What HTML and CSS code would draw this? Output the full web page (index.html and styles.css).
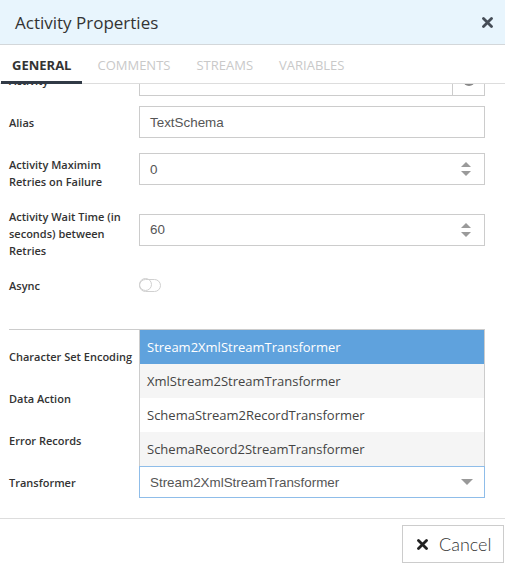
FILE: index.html
```html
<html lang="en">
<head>
    <meta charset="UTF-8">
    <meta name="viewport" content="width=device-width, initial-scale=1.0">
    <title>Activity Properties</title>
    <link rel="stylesheet" href="styles.css">
</head>
<body>
    <div class="modal">
        <div class="modal_header">
            <span class="title">Activity Properties</span>
            <span class="close">
                <svg width="11" height="11" viewBox="0 0 11 11"><path d="M1.5 1.5 L9.5 9.5 M9.5 1.5 L1.5 9.5" stroke="#454d57" stroke-width="2.8" stroke-linecap="round"/></svg>
            </span>
        </div>
        <div class="tabs">
            <span class="tab active">General</span>
            <span class="tab">Comments</span>
            <span class="tab">Streams</span>
            <span class="tab">Variables</span>
        </div>
        <div class="modal_body">
            <div class="body_inner">
                <div class="row">
                    <label>Activity</label>
                    <div class="control">
                        <div class="input with_addon">
                            <span class="field"></span>
                            <span class="addon"><span class="dot"></span></span>
                        </div>
                    </div>
                </div>
                <div class="row">
                    <label>Alias</label>
                    <div class="control">
                        <div class="input"><span class="field">TextSchema</span></div>
                    </div>
                </div>
                <div class="row">
                    <label class="multi">Activity Maximim Retries on Failure</label>
                    <div class="control">
                        <div class="input">
                            <span class="field">0</span>
                            <span class="spinner"><i class="up"></i><i class="down"></i></span>
                        </div>
                    </div>
                </div>
                <div class="row">
                    <label class="multi">Activity Wait Time (in seconds) between Retries</label>
                    <div class="control">
                        <div class="input">
                            <span class="field">60</span>
                            <span class="spinner"><i class="up"></i><i class="down"></i></span>
                        </div>
                    </div>
                </div>
                <div class="row">
                    <label>Async</label>
                    <div class="control">
                        <span class="toggle"></span>
                    </div>
                </div>

                <div class="separator"></div>

                <div class="row">
                    <label>Character Set Encoding</label>
                    <div class="control"><div class="input"></div></div>
                </div>
                <div class="row">
                    <label>Data Action</label>
                    <div class="control"><div class="input"></div></div>
                </div>
                <div class="row">
                    <label>Error Records</label>
                    <div class="control"><div class="input"></div></div>
                </div>
                <div class="row">
                    <label>Transformer</label>
                    <div class="control">
                        <ul class="dropdown">
                            <li class="selected">Stream2XmlStreamTransformer</li>
                            <li class="odd">XmlStream2StreamTransformer</li>
                            <li>SchemaStream2RecordTransformer</li>
                            <li class="odd">SchemaRecord2StreamTransformer</li>
                        </ul>
                        <div class="input select focused">
                            <span class="field">Stream2XmlStreamTransformer</span>
                            <span class="caret"></span>
                        </div>
                    </div>
                </div>
            </div>
        </div>
        <div class="modal_footer">
            <button class="cancel">
                <svg width="11" height="11" viewBox="0 0 11 11"><path d="M1.5 1.5 L9.5 9.5 M9.5 1.5 L1.5 9.5" stroke="#222" stroke-width="2.8" stroke-linecap="round"/></svg>
                Cancel
            </button>
        </div>
    </div>
</body>
</html>
```

FILE: styles.css
```css
body {
    margin: 0;
    background-color: #fff;
    font-family: "Open Sans", "Liberation Sans", sans-serif;
    color: #333;
}
.modal {
    width: 505px;
    height: 566px;
    overflow: hidden;
}
.modal_header {
    height: 44px;
    background-color: #e8f5fd;
    border-bottom: 1px solid #d3d7da;
    display: flex;
    align-items: center;
    justify-content: space-between;
    padding: 0 12px 0 15px;
}
.modal_header .title {
    font-size: 17px;
    color: #333;
}
.modal_header .close {
    display: flex;
    margin-top: 1px;
}
.tabs {
    display: flex;
    height: 38px;
    border-bottom: 1px solid #ddd;
    padding-left: 1px;
}
.tabs .tab {
    text-transform: uppercase;
    font-size: 13px;
    color: #c9c9c9;
    padding: 3px 11px 0;
    margin-right: 4px;
    display: flex;
    align-items: center;
    border-bottom: 3px solid transparent;
    margin-bottom: -1px;
}
.tabs .tab.active {
    color: #333;
    font-weight: 700;
    border-bottom-color: #313a46;
}
.modal_body {
    height: 434px;
    overflow: hidden;
    border-bottom: 1px solid #ddd;
}
.body_inner {
    margin-top: -20px;
    padding: 0 20px 0 9px;
}
.row {
    display: flex;
    align-items: center;
    margin-bottom: 10px;
}
.row label {
    width: 130px;
    box-sizing: border-box;
    flex-shrink: 0;
    font-size: 11px;
    font-weight: 600;
    line-height: 17px;
    color: #333;
}
.row label.multi {
    padding-top: 8px;
    padding-right: 4px;
}
.control {
    flex: 1;
    position: relative;
    min-height: 32px;
    display: flex;
    align-items: center;
}
.input {
    width: 100%;
    height: 32px;
    box-sizing: border-box;
    border: 1px solid #ccc;
    display: flex;
    align-items: center;
    font-family: "Liberation Sans", Arial, sans-serif;
    font-size: 13.4px;
    color: #555;
    background-color: #fff;
}
.input .field {
    flex: 1;
    padding-left: 10px;
}
.input .addon {
    width: 31px;
    height: 100%;
    border-left: 1px solid #ccc;
    display: flex;
    align-items: center;
    justify-content: center;
}
.input .addon .dot {
    width: 12px;
    height: 12px;
    border-radius: 50%;
    background-color: #888;
}
.spinner {
    display: flex;
    flex-direction: column;
    gap: 4px;
    margin-right: 13px;
}
.spinner i {
    width: 0;
    height: 0;
    border-left: 5px solid transparent;
    border-right: 5px solid transparent;
}
.spinner .up {
    border-bottom: 5px solid #9a9a9a;
}
.spinner .down {
    border-top: 5px solid #9a9a9a;
}
.toggle {
    width: 20px;
    height: 11px;
    border: 1.5px solid #d0d0d0;
    border-radius: 8px;
    position: relative;
}
.toggle::before {
    content: "";
    position: absolute;
    left: -1.5px;
    top: -1.5px;
    width: 11px;
    height: 11px;
    border: 1.5px solid #d0d0d0;
    border-radius: 50%;
}
.separator {
    border-top: 1px solid #ccc;
    margin: 28px 0 10px 0;
}
.select.focused {
    border-color: #8fbde9;
}
.select .caret {
    width: 0;
    height: 0;
    border-left: 6px solid transparent;
    border-right: 6px solid transparent;
    border-top: 6px solid #999;
    margin-right: 11px;
}
.dropdown {
    position: absolute;
    left: 0;
    right: 0;
    bottom: 100%;
    margin: 0;
    padding: 0;
    list-style: none;
    border: 1px solid #ccc;
    border-bottom: none;
    background-color: #fff;
    font-size: 13px;
    color: #444;
}
.dropdown li {
    height: 34px;
    line-height: 34px;
    padding-left: 7px;
}
.dropdown li.odd {
    background-color: #f5f5f5;
}
.dropdown li.selected {
    background-color: #5fa2dd;
    color: #fff;
}
.modal_footer {
    display: flex;
    justify-content: flex-end;
    padding: 6px 1px 0 0;
}
.cancel {
    width: 102px;
    height: 38px;
    border: 1px solid #ccc;
    background-color: #fff;
    display: flex;
    align-items: center;
    gap: 11px;
    padding: 0 0 0 14px;
    font-family: Lato, "Open Sans", sans-serif;
    font-weight: 300;
    font-size: 18px;
    color: #333;
}
```
